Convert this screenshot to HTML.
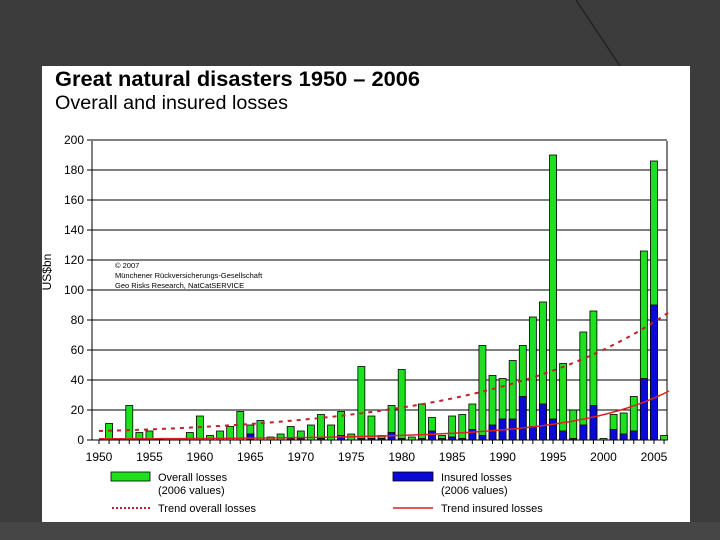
<!DOCTYPE html>
<html><head><meta charset="utf-8"><style>
body{margin:0;width:720px;height:540px;background:#3c3c3c;overflow:hidden;position:relative;font-family:"Liberation Sans",Arial,sans-serif}
#bot{position:absolute;left:0;top:522px;width:720px;height:18px;background:#464646}
#panel{position:absolute;left:42px;top:66px;width:648px;height:456px;background:#fff}
</style></head><body>
<div id="bot"></div>
<svg style="position:absolute;left:0;top:0" width="720" height="70"><line x1="576" y1="0" x2="620" y2="66" stroke="#222" stroke-width="1.5"/></svg>
<div id="panel"></div>
<svg id="c" style="position:absolute;left:0;top:0" width="720" height="540" font-family="Liberation Sans, Arial, sans-serif"></svg>
<script>
var s='';
s+='<text x="55" y="86" font-size="21" font-weight="bold" fill="#000" textLength="365" lengthAdjust="spacingAndGlyphs">Great natural disasters 1950 – 2006</text>';
s+='<text x="55" y="109" font-size="19" fill="#000" textLength="233" lengthAdjust="spacingAndGlyphs">Overall and insured losses</text>';
var L=92,R=667,T=141,B=440;
function Y(v){return B-v*1.5}
function X(y){return 99+(y-1950)*10.09}
for(var v=0;v<=200;v+=20){s+='<line x1="'+(L-5)+'" x2="'+R+'" y1="'+Y(v)+'" y2="'+Y(v)+'" stroke="#000" stroke-width="1"/>';s+='<text x="'+(L-8)+'" y="'+(Y(v)+4)+'" font-size="12" text-anchor="end">'+v+'</text>';}
s+='<line x1="'+L+'" x2="'+L+'" y1="'+T+'" y2="'+B+'" stroke="#000"/><line x1="'+R+'" x2="'+R+'" y1="'+T+'" y2="'+B+'" stroke="#000"/>';
for(var y=1950;y<=2006;y++){var x=X(y);s+='<line x1="'+x+'" x2="'+x+'" y1="'+B+'" y2="'+(B+4)+'" stroke="#000"/>';}
for(var y=1950;y<=2005;y+=5)s+='<text x="'+X(y)+'" y="'+(B+21)+'" font-size="12" text-anchor="middle">'+y+'</text>';
var d={1951:[11,0],1953:[23,0],1954:[5,1],1955:[6,0],1956:[.5,0],1959:[5,0],1960:[16,0],1961:[3,0],1962:[6,0],1963:[9,0],1964:[19,0],1965:[10,4],1966:[13,0],1967:[2,0],1968:[4,0],1969:[9,1],1970:[6,1],1971:[10,0],1972:[17,1],1973:[10,0],1974:[19,3],1975:[4,0],1976:[49,1],1977:[16,1],1978:[3,1],1979:[23,5],1980:[47,1],1981:[2,0],1982:[24,1],1983:[15,6],1984:[3,1],1985:[16,2],1986:[17,1],1987:[24,7],1988:[63,3],1989:[43,10],1990:[41,14],1991:[53,14],1992:[63,29],1993:[82,9],1994:[92,24],1995:[190,14],1996:[51,6],1997:[20,1],1998:[72,10],1999:[86,23],2000:[1,0],2001:[17,7],2002:[18,4],2003:[29,6],2004:[126,41],2005:[186,90],2006:[3,0]};
for(var k in d){var x=X(+k)-3.5,o=d[k][0],i=d[k][1];
s+='<rect x="'+x+'" y="'+Y(o)+'" width="7" height="'+(o*1.5)+'" fill="#1fe01f" stroke="#000" stroke-width="0.8"/>';
if(i>0)s+='<rect x="'+x+'" y="'+Y(i)+'" width="7" height="'+(i*1.5)+'" fill="#0a0ad8" stroke="#000" stroke-width="0.8"/>';}
var p1='',p2='';
for(var y=1950;y<=2006.5;y+=0.5){var t=(y-1950)/56;var a=6*Math.pow(83/6,Math.pow(t,1.15));var b=0.8*Math.pow(31/0.8,Math.pow(t,1.6));p1+=(p1?'L':'M')+X(y)+' '+Y(a);p2+=(p2?'L':'M')+X(y)+' '+Y(b);}
s+='<path d="'+p1+'" fill="none" stroke="#c0202a" stroke-width="2" stroke-dasharray="4,5"/>';
s+='<path d="'+p2+'" fill="none" stroke="#e02020" stroke-width="1.5"/>';
s+='<text x="51" y="272" font-size="12" transform="rotate(-90 51 272)" text-anchor="middle">US$bn</text>';
s+='<text font-size="7.5" x="115" y="268">© 2007</text><text font-size="7.5" x="115" y="278">Münchener Rückversicherungs-Gesellschaft</text><text font-size="7.5" x="115" y="288">Geo Risks Research, NatCatSERVICE</text>';
s+='<rect x="111" y="472" width="39" height="9" fill="#1fe01f" stroke="#000" stroke-width="0.8"/><text x="158" y="481" font-size="11">Overall losses</text><text x="158" y="494" font-size="11">(2006 values)</text>';
s+='<line x1="112" x2="150" y1="508" y2="508" stroke="#c0202a" stroke-width="2" stroke-dasharray="2,2"/><text x="158" y="512" font-size="11">Trend overall losses</text>';
s+='<rect x="393" y="472" width="40" height="9" fill="#0a0ad8" stroke="#000" stroke-width="0.8"/><text x="441" y="481" font-size="11">Insured losses</text><text x="441" y="494" font-size="11">(2006 values)</text>';
s+='<line x1="393" x2="433" y1="508" y2="508" stroke="#e02020" stroke-width="1.5"/><text x="441" y="512" font-size="11">Trend insured losses</text>';
document.getElementById('c').innerHTML=s;
</script>
</body></html>
